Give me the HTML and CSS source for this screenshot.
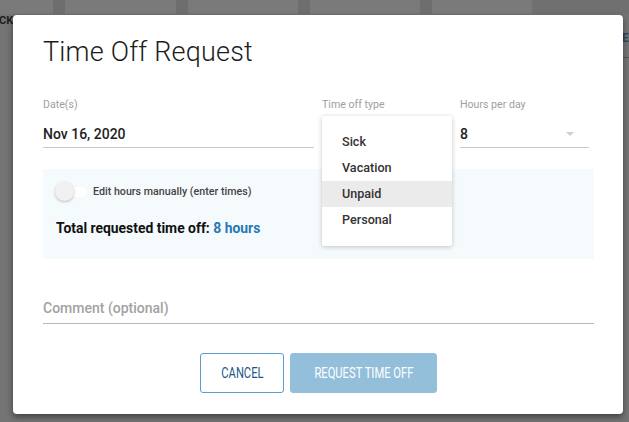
FILE: index.html
```html
<!DOCTYPE html>
<html lang="en">
<head>
    <meta charset="UTF-8">
    <meta name="viewport" content="width=device-width, initial-scale=1.0">
    <title>Time Off Request</title>
    <link rel="stylesheet" href="styles.css">
</head>
<body>
    <!-- page behind the modal, dimmed by the backdrop -->
    <div class="page">
        <div class="page-header">
            <div class="col"></div>
            <div class="col-gap"></div>
            <div class="col"></div>
            <div class="col-gap"></div>
            <div class="col"></div>
            <div class="col-gap"></div>
            <div class="col"></div>
            <div class="col-wide"></div>
            <div class="page-btn"></div>
        </div>
        <span class="page-text">CK</span>
        <span class="page-link">E</span>
        <div class="page-rule"></div>
    </div>

    <div class="dialog">
        <h1>Time Off Request</h1>

        <div class="fields">
            <div class="field">
                <label>Date(s)</label>
                <div class="value">Nov 16, 2020</div>
            </div>
            <div class="field type-field">
                <label>Time off type</label>
                <div class="value"></div>
                <ul class="menu">
                    <li>Sick</li>
                    <li>Vacation</li>
                    <li class="hover">Unpaid</li>
                    <li>Personal</li>
                </ul>
            </div>
            <div class="field">
                <label>Hours per day</label>
                <div class="value select">8<span class="arrow"></span></div>
            </div>
        </div>

        <div class="summary">
            <div class="toggle-row">
                <div class="switch">
                    <span class="track"></span>
                    <span class="thumb"></span>
                </div>
                <span class="toggle-label">Edit hours manually (enter times)</span>
            </div>
            <div class="total">Total requested time off: <span class="hours">8 hours</span></div>
        </div>

        <div class="comment">Comment (optional)</div>

        <div class="actions">
            <button class="btn btn-outline"><span>CANCEL</span></button>
            <button class="btn btn-primary"><span>REQUEST TIME OFF</span></button>
        </div>
    </div>
</body>
</html>
```

FILE: styles.css
```css
body {
    margin: 0;
    width: 629px;
    height: 422px;
    overflow: hidden;
    background-color: #747474;
    font-family: Roboto, "Noto Sans", Arial, sans-serif;
    color: #222;
}
.page {
    position: relative;
    height: 422px;
}
.page-header {
    display: flex;
    height: 14px;
    background-color: #7a7a7a;
}
.col {
    width: 12px;
    background-color: #6e6e6e;
}
.col:first-child {
    margin-left: 53px;
}
.col-gap {
    width: 115px;
}
.col-gap:nth-child(4) {
    width: 114px;
}
.col-gap:nth-child(6) {
    width: 114px;
}
.col-wide {
    width: 100px;
    margin-left: 100px;
    background-color: #707070;
}
.page-btn {
    flex: 1;
    height: 10px;
    background-color: #12354f;
    border-bottom-left-radius: 4px;
}
.page-text {
    position: absolute;
    left: -1px;
    top: 14px;
    font-size: 11px;
    font-weight: 700;
    color: #1e1e1e;
}
.page-link {
    position: absolute;
    left: 622px;
    top: 31px;
    font-size: 12px;
    font-weight: 700;
    color: #2b4a63;
}
.page-rule {
    position: absolute;
    left: 623px;
    top: 57px;
    width: 6px;
    height: 1px;
    background-color: #556;
}

.dialog {
    position: absolute;
    left: 13px;
    top: 15px;
    width: 610px;
    height: 399px;
    box-sizing: border-box;
    padding: 21px 29px 0 30px;
    background-color: white;
    border-radius: 4px;
    box-shadow: 0 3px 6px rgba(0, 0, 0, 0.45);
}
h1 {
    margin: 0;
    font-size: 27px;
    line-height: 32px;
    font-weight: 300;
    letter-spacing: 0.2px;
    color: #1c1c1c;
}
.fields {
    display: grid;
    grid-template-columns: 271px 130px 129px;
    column-gap: 8px;
    margin-top: 30px;
}
.field {
    position: relative;
}
label {
    display: block;
    font-size: 10.6px;
    line-height: 14px;
    color: #9e9e9e;
}
.value {
    margin-top: 12px;
    padding-bottom: 3px;
    font-size: 14px;
    line-height: 20px;
    font-weight: 500;
    color: #222;
    border-bottom: 1px solid #c9c9c9;
    height: 20px;
}
.select {
    position: relative;
}
.arrow {
    position: absolute;
    right: 15px;
    top: 8px;
    border-left: 4px solid transparent;
    border-right: 4px solid transparent;
    border-top: 4px solid #cfcfcf;
}
.menu {
    position: absolute;
    left: 0;
    top: 18px;
    width: 130px;
    margin: 0;
    padding: 13px 0;
    list-style: none;
    background-color: white;
    border-radius: 2px;
    box-shadow: 0 1px 5px rgba(0, 0, 0, 0.22);
    z-index: 2;
}
.menu li {
    padding-left: 20px;
    font-size: 12.6px;
    line-height: 26px;
    font-weight: 500;
    color: #333;
}
.menu li.hover {
    background-color: #ebebeb;
}

.summary {
    margin-top: 21px;
    height: 90px;
    box-sizing: border-box;
    padding: 13px 13px 0 12px;
    background-color: #f5fafd;
}
.toggle-row {
    display: flex;
    align-items: center;
    height: 19px;
}
.switch {
    position: relative;
    width: 32px;
    height: 19px;
}
.track {
    position: absolute;
    left: 3px;
    top: 5px;
    width: 29px;
    height: 10px;
    border-radius: 5px;
    background-color: white;
}
.thumb {
    position: absolute;
    left: 0;
    top: 0;
    width: 19px;
    height: 19px;
    border-radius: 50%;
    background-color: #f1f1f1;
    box-shadow: 0 1px 3px rgba(0, 0, 0, 0.25);
}
.toggle-label {
    margin-left: 6px;
    font-size: 10.7px;
    font-weight: 500;
    color: #444;
}
.total {
    margin-top: 17px;
    padding-left: 1px;
    font-size: 13.9px;
    line-height: 20px;
    font-weight: 700;
    color: #111;
}
.hours {
    color: #2878b5;
}

.comment {
    margin-top: 39px;
    padding-bottom: 5px;
    font-size: 14px;
    line-height: 20px;
    font-weight: 500;
    color: #a2a2a2;
    border-bottom: 1px solid #b8b8b8;
}

.actions {
    display: flex;
    justify-content: center;
    gap: 6px;
    margin-top: 29px;
}
.btn {
    height: 40px;
    border-radius: 3px;
    font-family: Roboto, Arial, sans-serif;
    font-size: 14px;
    padding: 0;
    cursor: pointer;
}
.btn span {
    display: inline-block;
    transform: scaleX(0.8);
}
.btn-outline {
    width: 84px;
    background-color: white;
    border: 1px solid #5e9ccc;
    color: #1d5889;
}
.btn-primary {
    width: 147px;
    background-color: #93bfdb;
    border: 1px solid #93bfdb;
    color: white;
}
```
